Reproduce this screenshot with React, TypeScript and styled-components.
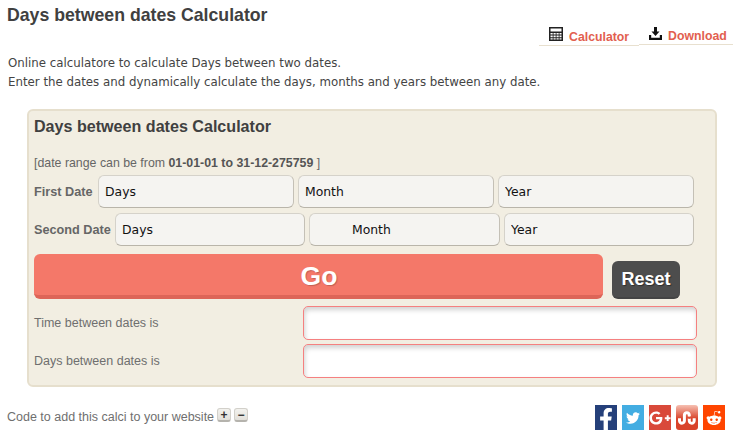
import React from "react";
import styled, { createGlobalStyle } from "styled-components";
import { FaFacebookF, FaGooglePlusG, FaRedditAlien, FaStumbleupon, FaTwitter } from "react-icons/fa";

const GlobalStyle = createGlobalStyle`
  html, body {
    margin: 0;
    background: #fff;
    font-family: "Liberation Sans", Arial, sans-serif;
    color: #444;
  }
`;

const Page = styled.div`
  width: 733px;
  height: 434px;
  overflow: hidden;
`;

const Header = styled.header`
  display: flex;
  justify-content: space-between;
  height: 46px;
  padding-left: 7px;
`;

const Title = styled.h1`
  margin: 5px 0 0;
  font-size: 17.7px;
  line-height: 20px;
  font-weight: bold;
  color: #404040;
`;

const Tabs = styled.nav`
  display: flex;
  align-items: flex-start;
  padding-top: 24px;
`;

const Tab = styled.a<{ $width: number; $height: number }>`
  display: flex;
  align-items: flex-start;
  gap: 6px;
  box-sizing: border-box;
  width: ${(p) => p.$width}px;
  height: ${(p) => p.$height}px;
  padding: 3px 0 0 10px;
  border-bottom: 1px solid #e8e0cf;
`;

const TabLabel = styled.span<{ $nudge?: number }>`
  margin-top: ${(p) => p.$nudge ?? 0}px;
  color: #e2604f;
  font-size: 12.3px;
  font-weight: bold;
  line-height: 18px;
`;

const Intro = styled.p`
  margin: 8px 0 0 8px;
  font-family: "DejaVu Sans", sans-serif;
  font-size: 11.8px;
  line-height: 19px;
  color: #444;
`;

const Panel = styled.section`
  box-sizing: border-box;
  width: 690px;
  height: 278px;
  margin: 17px 0 0 27px;
  padding: 5px 5px 0;
  background: #f2eee2;
  border: 2px solid #e6dfcd;
  border-radius: 6px;
`;

const PanelTitle = styled.h2`
  margin: 0;
  font-size: 16.1px;
  line-height: 20px;
  font-weight: bold;
  color: #404040;
`;

const RangeNote = styled.p`
  margin: 20px 0 0;
  font-size: 12.35px;
  line-height: 15px;
  color: #666;

  b {
    color: #555;
  }
`;

const DateRow = styled.div<{ $top: number }>`
  display: flex;
  align-items: center;
  gap: 4px;
  margin-top: ${(p) => p.$top}px;
`;

const DateLabel = styled.label<{ $width: number }>`
  flex: none;
  width: ${(p) => p.$width}px;
  white-space: nowrap;
  font-size: 12.7px;
  font-weight: bold;
  color: #666;
`;

const DateSelect = styled.select<{ $width: number; $indent?: number }>`
  appearance: none;
  box-sizing: border-box;
  width: ${(p) => p.$width}px;
  height: 33px;
  padding: 0 0 0 ${(p) => p.$indent ?? 6}px;
  background: #f5f4f1;
  border: 1px solid #d5d2ca;
  border-bottom: 1.5px solid #b9b5aa;
  border-right: 1.5px solid #c4c0b6;
  border-radius: 6px;
  color: #111;
  font-family: "DejaVu Sans", sans-serif;
  font-size: 12.4px;
`;

const ActionRow = styled.div`
  display: flex;
  align-items: flex-end;
  gap: 9px;
  margin-top: 8px;
`;

const GoButton = styled.button`
  box-sizing: border-box;
  width: 569px;
  height: 45px;
  padding: 3px 0 0 1px;
  background: #f47869;
  border: 0;
  border-bottom: 4px solid #dd6558;
  border-radius: 6px;
  color: #fff;
  font-family: "Liberation Sans", sans-serif;
  font-size: 26.5px;
  font-weight: bold;
  text-shadow: 1px 1px 1px rgba(0, 0, 0, 0.2);
`;

const ResetButton = styled.button`
  box-sizing: border-box;
  width: 68px;
  height: 38px;
  padding: 0;
  background: #4d4d4d;
  border: 0;
  border-bottom: 2px solid #444;
  border-radius: 6px;
  color: #fff;
  font-family: "Liberation Sans", sans-serif;
  font-size: 18px;
  font-weight: bold;
  text-shadow: 1px 1px 1px rgba(0, 0, 0, 0.4);
`;

const ResultRow = styled.div<{ $top: number }>`
  display: flex;
  align-items: center;
  justify-content: space-between;
  width: 663px;
  margin-top: ${(p) => p.$top}px;
`;

const ResultLabel = styled.label`
  font-size: 12.5px;
  color: #6f6f6f;
`;

const ResultInput = styled.input`
  box-sizing: border-box;
  width: 394px;
  height: 34px;
  background: #fff;
  border: 1px solid #f58080;
  border-radius: 5px;
  box-shadow: inset 1px 3px 5px rgba(0, 0, 0, 0.18);
  outline: none;
`;

const Footer = styled.footer`
  display: flex;
  justify-content: space-between;
  margin-top: 18px;
  padding: 0 8px 0 7px;
`;

const CodeLine = styled.div`
  display: flex;
  align-items: flex-start;
  gap: 3px;
  padding-top: 4px;
  font-size: 12.5px;
  line-height: 16px;
  color: #6f6f6f;
`;

const ToggleButton = styled.button`
  box-sizing: border-box;
  width: 14px;
  height: 14px;
  margin-top: -1px;
  padding: 0;
  background: linear-gradient(#f3f2ee, #e2e0da);
  border: 1px solid #d2d0ca;
  border-bottom: 2px solid #b5b3ad;
  border-radius: 3px;
  color: #333;
  font-family: "Liberation Sans", sans-serif;
  font-size: 12px;
  font-weight: bold;
  line-height: 10px;
`;

const Socials = styled.div`
  display: flex;
  gap: 5px;
`;

const SocialTile = styled.a<{ $bg: string; $corner?: boolean; $round?: boolean }>`
  display: flex;
  align-items: ${(p) => (p.$corner ? "flex-end" : "center")};
  justify-content: ${(p) => (p.$corner ? "flex-end" : "center")};
  width: 22px;
  height: 25px;
  overflow: hidden;
  background: ${(p) => p.$bg};
  border-radius: ${(p) => (p.$round ? "3px" : "0")};
  color: #fff;
`;

const socials = [
  { bg: "#25407a", Icon: FaFacebookF, size: 22, corner: true },
  { bg: "#43ade2", Icon: FaTwitter, size: 14 },
  { bg: "#d9493a", Icon: FaGooglePlusG, size: 22 },
  { bg: "linear-gradient(#f6c0b2, #d9432a 55%)", Icon: FaStumbleupon, size: 18, round: true },
  { bg: "#ff4500", Icon: FaRedditAlien, size: 16 },
];

const CalculatorIcon = () => (
  <svg width="14" height="14" viewBox="0 0 14 14" fill="#222">
    <path d="M0 0h14v14H0zM1.5 1.5v3h11v-3zM1.5 6v1.6h2.2V6zm3 0v1.6h2.2V6zm3 0v1.6h2.2V6zm3 0v1.6h2V6zM1.5 8.6v1.6h2.2V8.6zm3 0v1.6h2.2V8.6zm3 0v1.6h2.2V8.6zm3 0v1.6h2V8.6zM1.5 11.2v1.4h2.2v-1.4zm3 0v1.4h2.2v-1.4zm3 0v1.4h2.2v-1.4zm3 0v1.4h2v-1.4z" fillRule="evenodd" />
  </svg>
);

const DownloadIcon = () => (
  <svg width="13" height="13" viewBox="0 0 13 13" fill="#111">
    <path d="M5 0h3v4.5h2.5L6.5 9l-4-4.5H5z" />
    <path d="M0 8h2.2v2.8h8.6V8H13v5H0z" />
  </svg>
);

function DateField({ name, width, indent }: { name: string; width: number; indent?: number }) {
  return (
    <DateSelect $width={width} $indent={indent} defaultValue={name}>
      <option>{name}</option>
    </DateSelect>
  );
}

export default function App() {
  return (
    <Page>
      <GlobalStyle />
      <Header>
        <Title>Days between dates Calculator</Title>
        <Tabs>
          <Tab $width={100} $height={22}>
            <CalculatorIcon />
            <TabLabel $nudge={1}>Calculator</TabLabel>
          </Tab>
          <Tab $width={94} $height={21}>
            <DownloadIcon />
            <TabLabel>Download</TabLabel>
          </Tab>
        </Tabs>
      </Header>
      <Intro>
        Online calculatore to calculate Days between two dates.
        <br />
        Enter the dates and dynamically calculate the days, months and years between any date.
      </Intro>
      <Panel>
        <PanelTitle>Days between dates Calculator</PanelTitle>
        <RangeNote>
          [date range can be from <b>01-01-01 to 31-12-275759</b> ]
        </RangeNote>
        <DateRow $top={4}>
          <DateLabel $width={60}>First Date</DateLabel>
          <DateField name="Days" width={196} />
          <DateField name="Month" width={196} />
          <DateField name="Year" width={196} />
        </DateRow>
        <DateRow $top={5}>
          <DateLabel $width={77}>Second Date</DateLabel>
          <DateField name="Days" width={190} />
          <DateField name="Month" width={191} indent={42} />
          <DateField name="Year" width={190} />
        </DateRow>
        <ActionRow>
          <GoButton>Go</GoButton>
          <ResetButton>Reset</ResetButton>
        </ActionRow>
        <ResultRow $top={7}>
          <ResultLabel>Time between dates is</ResultLabel>
          <ResultInput readOnly />
        </ResultRow>
        <ResultRow $top={4}>
          <ResultLabel>Days between dates is</ResultLabel>
          <ResultInput readOnly />
        </ResultRow>
      </Panel>
      <Footer>
        <CodeLine>
          <span>Code to add this calci to your website</span>
          <ToggleButton>+</ToggleButton>
          <ToggleButton>−</ToggleButton>
        </CodeLine>
        <Socials>
          {socials.map(({ bg, Icon, size, corner, round }) => (
            <SocialTile key={bg} $bg={bg} $corner={corner} $round={round}>
              <Icon size={size} />
            </SocialTile>
          ))}
        </Socials>
      </Footer>
    </Page>
  );
}
